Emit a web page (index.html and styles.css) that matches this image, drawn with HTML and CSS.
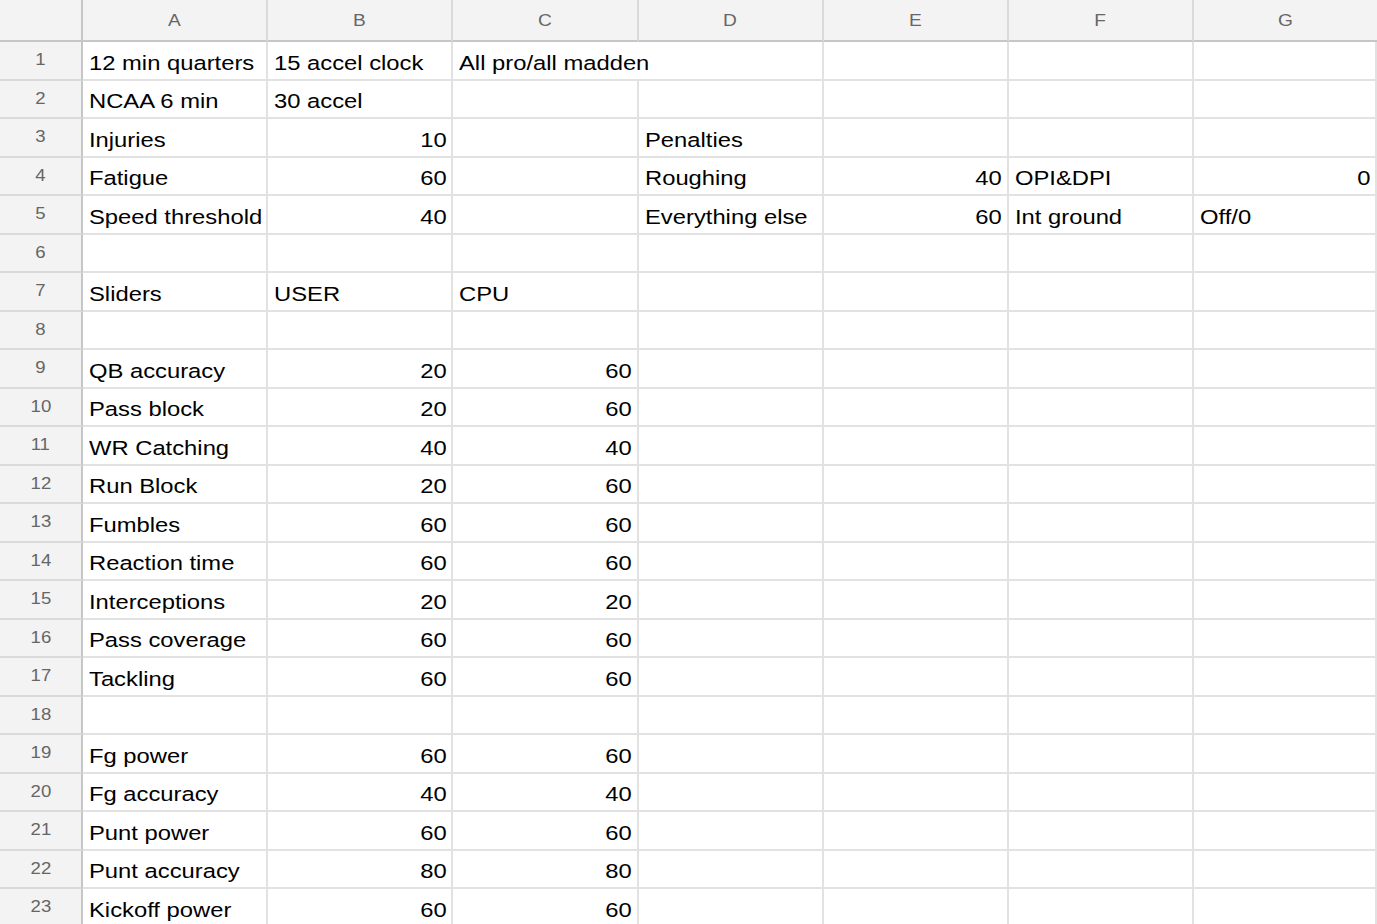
FILE: index.html
```html
<!DOCTYPE html>
<html>
<head>
<meta charset="utf-8">
<title>Sliders</title>
<link rel="stylesheet" href="styles.css">
</head>
<body>
<div class="sheet">
  <div class="corner"></div>
  <div class="ch"><span>A</span></div><div class="ch"><span>B</span></div><div class="ch"><span>C</span></div><div class="ch"><span>D</span></div><div class="ch"><span>E</span></div><div class="ch"><span>F</span></div><div class="ch last"><span>G</span></div>

  <div class="rh"><span>1</span></div><div class="c"><span>12 min quarters</span></div><div class="c"><span>15 accel clock</span></div><div class="c span2"><span>All pro/all madden</span></div><div class="c"></div><div class="c"></div><div class="c"></div>
  <div class="rh"><span>2</span></div><div class="c"><span>NCAA 6 min</span></div><div class="c"><span>30 accel</span></div><div class="c"></div><div class="c"></div><div class="c"></div><div class="c"></div><div class="c"></div>
  <div class="rh"><span>3</span></div><div class="c"><span>Injuries</span></div><div class="c n"><span>10</span></div><div class="c"></div><div class="c"><span>Penalties</span></div><div class="c"></div><div class="c"></div><div class="c"></div>
  <div class="rh"><span>4</span></div><div class="c"><span>Fatigue</span></div><div class="c n"><span>60</span></div><div class="c"></div><div class="c"><span>Roughing</span></div><div class="c n"><span>40</span></div><div class="c"><span>OPI&amp;DPI</span></div><div class="c n"><span>0</span></div>
  <div class="rh"><span>5</span></div><div class="c"><span>Speed threshold</span></div><div class="c n"><span>40</span></div><div class="c"></div><div class="c"><span>Everything else</span></div><div class="c n"><span>60</span></div><div class="c"><span>Int ground</span></div><div class="c"><span>Off/0</span></div>
  <div class="rh"><span>6</span></div><div class="c"></div><div class="c"></div><div class="c"></div><div class="c"></div><div class="c"></div><div class="c"></div><div class="c"></div>
  <div class="rh"><span>7</span></div><div class="c"><span>Sliders</span></div><div class="c"><span>USER</span></div><div class="c"><span>CPU</span></div><div class="c"></div><div class="c"></div><div class="c"></div><div class="c"></div>
  <div class="rh"><span>8</span></div><div class="c"></div><div class="c"></div><div class="c"></div><div class="c"></div><div class="c"></div><div class="c"></div><div class="c"></div>
  <div class="rh"><span>9</span></div><div class="c"><span>QB accuracy</span></div><div class="c n"><span>20</span></div><div class="c n"><span>60</span></div><div class="c"></div><div class="c"></div><div class="c"></div><div class="c"></div>
  <div class="rh"><span>10</span></div><div class="c"><span>Pass block</span></div><div class="c n"><span>20</span></div><div class="c n"><span>60</span></div><div class="c"></div><div class="c"></div><div class="c"></div><div class="c"></div>
  <div class="rh"><span>11</span></div><div class="c"><span>WR Catching</span></div><div class="c n"><span>40</span></div><div class="c n"><span>40</span></div><div class="c"></div><div class="c"></div><div class="c"></div><div class="c"></div>
  <div class="rh"><span>12</span></div><div class="c"><span>Run Block</span></div><div class="c n"><span>20</span></div><div class="c n"><span>60</span></div><div class="c"></div><div class="c"></div><div class="c"></div><div class="c"></div>
  <div class="rh"><span>13</span></div><div class="c"><span>Fumbles</span></div><div class="c n"><span>60</span></div><div class="c n"><span>60</span></div><div class="c"></div><div class="c"></div><div class="c"></div><div class="c"></div>
  <div class="rh"><span>14</span></div><div class="c"><span>Reaction time</span></div><div class="c n"><span>60</span></div><div class="c n"><span>60</span></div><div class="c"></div><div class="c"></div><div class="c"></div><div class="c"></div>
  <div class="rh"><span>15</span></div><div class="c"><span>Interceptions</span></div><div class="c n"><span>20</span></div><div class="c n"><span>20</span></div><div class="c"></div><div class="c"></div><div class="c"></div><div class="c"></div>
  <div class="rh"><span>16</span></div><div class="c"><span>Pass coverage</span></div><div class="c n"><span>60</span></div><div class="c n"><span>60</span></div><div class="c"></div><div class="c"></div><div class="c"></div><div class="c"></div>
  <div class="rh"><span>17</span></div><div class="c"><span>Tackling</span></div><div class="c n"><span>60</span></div><div class="c n"><span>60</span></div><div class="c"></div><div class="c"></div><div class="c"></div><div class="c"></div>
  <div class="rh"><span>18</span></div><div class="c"></div><div class="c"></div><div class="c"></div><div class="c"></div><div class="c"></div><div class="c"></div><div class="c"></div>
  <div class="rh"><span>19</span></div><div class="c"><span>Fg power</span></div><div class="c n"><span>60</span></div><div class="c n"><span>60</span></div><div class="c"></div><div class="c"></div><div class="c"></div><div class="c"></div>
  <div class="rh"><span>20</span></div><div class="c"><span>Fg accuracy</span></div><div class="c n"><span>40</span></div><div class="c n"><span>40</span></div><div class="c"></div><div class="c"></div><div class="c"></div><div class="c"></div>
  <div class="rh"><span>21</span></div><div class="c"><span>Punt power</span></div><div class="c n"><span>60</span></div><div class="c n"><span>60</span></div><div class="c"></div><div class="c"></div><div class="c"></div><div class="c"></div>
  <div class="rh"><span>22</span></div><div class="c"><span>Punt accuracy</span></div><div class="c n"><span>80</span></div><div class="c n"><span>80</span></div><div class="c"></div><div class="c"></div><div class="c"></div><div class="c"></div>
  <div class="rh"><span>23</span></div><div class="c"><span>Kickoff power</span></div><div class="c n"><span>60</span></div><div class="c n"><span>60</span></div><div class="c"></div><div class="c"></div><div class="c"></div><div class="c"></div>
</div>
</body>
</html>
```

FILE: styles.css
```css
html, body {
  margin: 0;
  padding: 0;
  background: #ffffff;
  overflow: hidden;
}

body {
  font-family: "Liberation Sans", Arial, sans-serif;
  color: #000;
}

.sheet {
  display: grid;
  grid-template-columns: 83px repeat(6, 185.2px) 1fr;
  grid-template-rows: 42px;
  grid-auto-rows: 38.5px;
  width: 1377px;
  height: 924px;
  overflow: hidden;
}

.corner {
  background: #f3f3f3;
  border-right: 2px solid #c6c6c6;
  border-bottom: 2px solid #c6c6c6;
  box-sizing: border-box;
}

.ch {
  background: #f3f3f3;
  border-right: 2px solid #dadada;
  border-bottom: 2px solid #c6c6c6;
  box-sizing: border-box;
  display: flex;
  align-items: center;
  justify-content: center;
  color: #666;
  font-size: 16.5px;
}

.ch.last {
  border-right: 0;
}

.rh {
  background: #f3f3f3;
  border-right: 2px solid #c6c6c6;
  border-bottom: 2px solid #dadada;
  box-sizing: border-box;
  display: flex;
  align-items: center;
  justify-content: center;
  color: #666;
  font-size: 16px;
}

.ch span,
.rh span {
  display: inline-block;
  transform: scaleX(1.16);
}

.c {
  border-right: 2px solid #e2e2e2;
  border-bottom: 2px solid #e2e2e2;
  box-sizing: border-box;
  display: flex;
  align-items: flex-end;
  justify-content: flex-start;
  padding: 0 5px 5px 6px;
  font-size: 20.5px;
  line-height: 23px;
  white-space: nowrap;
  min-width: 0;
}

.c span {
  display: inline-block;
  transform: scaleX(1.16);
  transform-origin: left bottom;
}

.c.n {
  justify-content: flex-end;
}

.c.n span {
  transform-origin: right bottom;
}

.c.span2 {
  grid-column: span 2;
}
```
